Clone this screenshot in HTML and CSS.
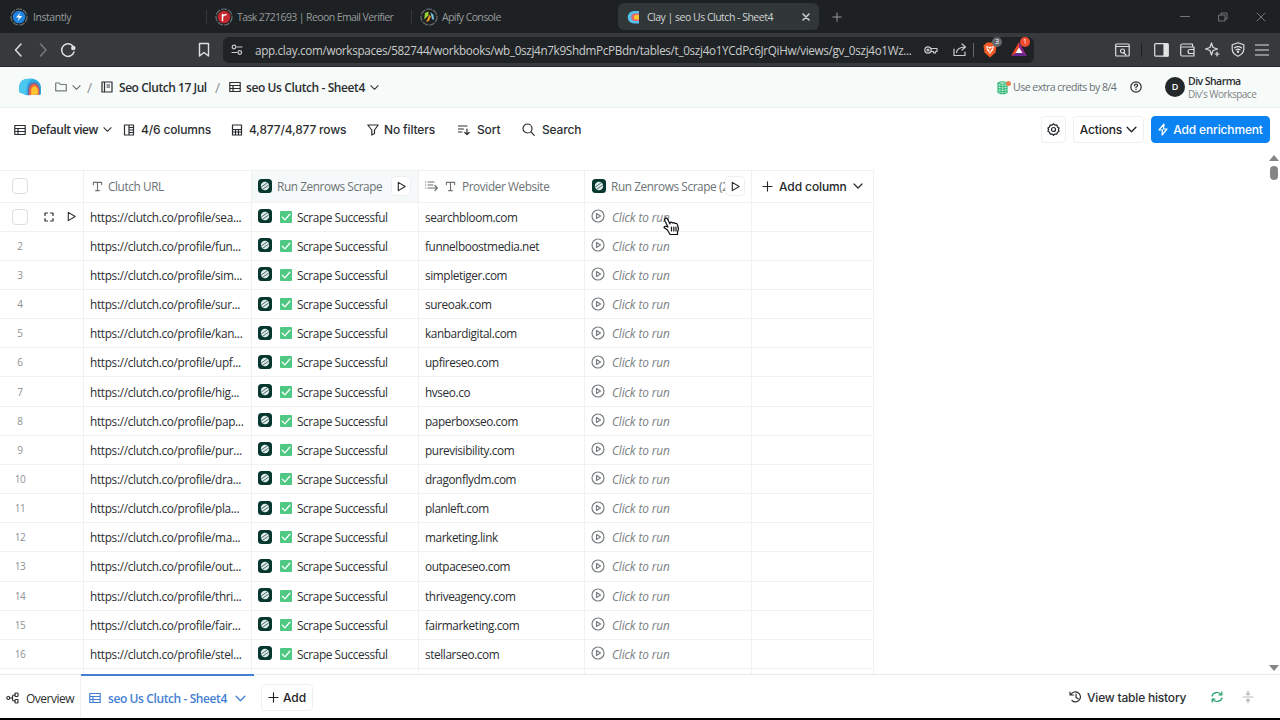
FILE: index.html
```html
<!DOCTYPE html>
<html lang="en">
<head>
    <meta charset="UTF-8">
    <meta name="viewport" content="width=device-width, initial-scale=1.0">
    <title>Clay | seo Us Clutch - Sheet4</title>
    <link rel="stylesheet" href="styles.css">
</head>
<body>

<!-- icons used more than once -->
<svg class="symbols" width="0" height="0">
    <symbol id="icon-chevron" viewBox="0 0 10 10"><path d="M1 3l4 4 4-4"/></symbol>
    <symbol id="icon-play" viewBox="0 0 12 12"><path d="M2.5 1.5v9l7.5-4.5z"/></symbol>
    <symbol id="icon-table" viewBox="0 0 12 12"><path d="M.8 1.5h10.4v9H.8zM.8 4.5h10.4M.8 7.5h10.4M4 4.5v6"/></symbol>
    <symbol id="icon-plus" viewBox="0 0 12 12"><path d="M6 1v10M1 6h10"/></symbol>
    <symbol id="icon-text" viewBox="0 0 12 12"><path d="M1.5 4V1.5h9V4M6 1.5v9M4 10.5h4"/></symbol>
    <symbol id="icon-zenrows" viewBox="0 0 14 14">
        <rect width="14" height="14" rx="3.5" fill="#06372f" stroke="none"/>
        <circle cx="7" cy="7" r="4.2" fill="#dfecea" stroke="none"/>
        <path d="M3.500 7.800l5.500-3.800M5 10l5.500-3.800" stroke="#06372f" stroke-width=".7"/>
    </symbol>
    <symbol id="icon-check" viewBox="0 0 12 12">
        <rect width="12" height="12" rx="1" fill="#4fc883" stroke="none"/>
        <path d="M2.3 6.3l2.6 2.6 4.9-5.6" stroke="#fff" stroke-width="1.3"/>
    </symbol>
    <symbol id="icon-run" viewBox="0 0 14 14"><circle cx="7" cy="7" r="6"/><path d="M5.5 4.5v5l4-2.5z"/></symbol>
</svg>

<div class="tabs">
    <div class="tab tab-instantly">
        <svg class="favicon" viewBox="0 0 18 18"><circle class="ring" cx="9" cy="9" r="8"/><circle cx="9" cy="9" r="6.3" fill="#1f83e0" stroke="none"/><path d="M10.5 4.5L6 9.5h3l-1.5 4L12.2 8H9z" fill="#fff" stroke="none"/></svg>
        <span>Instantly</span>
    </div>
    <div class="tab tab-reoon">
        <svg class="favicon" viewBox="0 0 18 18"><circle class="ring" cx="9" cy="9" r="8"/><circle cx="9" cy="9" r="6.3" fill="#c5272f" stroke="none"/><path d="M7.5 12.5V6.5M7.5 8.5q1-2 3.5-1.8" stroke="#fff" stroke-width="1.5"/></svg>
        <span>Task 2721693 | Reoon Email Verifier</span>
    </div>
    <div class="tab tab-apify">
        <svg class="favicon" viewBox="0 0 18 18"><circle class="ring" cx="9" cy="9" r="8"/><path d="M4.2 11.5L5 5l3.500-1.500v4z" fill="#9ad32c" stroke="none"/><path d="M6 14l3.500-7 1.500 1-2 5z" fill="#f29a25" stroke="none"/><path d="M10.500 4l3 3 .5 5-2-1z" fill="#72c4df" stroke="none"/></svg>
        <span>Apify Console</span>
    </div>
    <div class="tab tab-clay active">
        <svg class="favicon" viewBox="0 0 18 18"><path d="M14 3H9a6 6 0 0 0 0 12.500h5z" fill="#57c1ed" stroke="none"/><path d="M14 5.500h-4a3.700 3.700 0 0 0 0 7.500h4z" fill="#e9646d" stroke="none"/><path d="M14 7h-3a2 2 0 0 0 0 4.500h3z" fill="#ffc72e" stroke="none"/></svg>
        <span>Clay | seo Us Clutch - Sheet4</span>
        <svg class="close" viewBox="0 0 8 8"><path d="M1 1l6 6M7 1L1 7"/></svg>
    </div>
    <svg class="new-tab"><use href="#icon-plus"/></svg>
    <div class="window-buttons">
        <svg viewBox="0 0 10 10"><path d="M.5 4.500h9"/></svg>
        <svg viewBox="0 0 10 10"><path d="M1 3h6v6H1zM3 3V1h6v6H7"/></svg>
        <svg viewBox="0 0 10 10"><path d="M1 1l8 8M9 1L1 9"/></svg>
    </div>
</div>

<div class="browser-bar">
    <div class="nav-buttons">
        <svg width="16" height="16" viewBox="0 0 16 16"><path d="M11 2L5.500 8l5.500 6"/></svg>
        <svg class="dim" width="16" height="16" viewBox="0 0 16 16"><path d="M5.500 2L11 8l-5.500 6"/></svg>
        <svg width="16" height="16" viewBox="0 0 16 16"><path d="M14 10A6.300 6.300 0 1 1 13.500 5"/><circle cx="13.300" cy="6" r="1.500" fill="#ddd"/></svg>
    </div>
    <svg class="bookmark" width="12" height="16" viewBox="0 0 12 16"><path d="M1.500 1.500h9v12.500L6 10.500 1.500 14z"/></svg>
    <div class="address">
        <svg class="site-info" width="12" height="12" viewBox="0 0 12 12"><circle cx="3" cy="3" r="1.800"/><path d="M6 3h5M1 8.500h5"/><circle cx="8.800" cy="8.500" r="1.800"/></svg>
        <span class="url">app.clay.com/workspaces/582744/workbooks/wb_0szj4n7k9ShdmPcPBdn/tables/t_0szj4o1YCdPc6JrQiHw/views/gv_0szj4o1Wz...</span>
        <svg class="key" width="14" height="10" viewBox="0 0 14 10"><circle cx="4" cy="5" r="3.200"/><circle cx="4" cy="5" r="1"/><path d="M7 3.500h6v3h-1.500v1.500h-2V6.500H7"/></svg>
        <svg class="share" width="14" height="14" viewBox="0 0 14 14"><path d="M1 6v6.500h11V9M3.500 9.500Q4 4.500 12 4M9 1l3.500 3L9 7"/></svg>
        <span class="divider"></span>
        <div class="ext">
            <svg width="14" height="16" viewBox="0 0 14 16"><path d="M4 .5h6l3.500 3-1 7L7 15.500 1.500 10.500l-1-7z" fill="#f05a24" stroke="none"/><path d="M3 4l4 1 4-1-1 4-3 4-3-4z" fill="#fff" stroke="none"/><path d="M5 6l2 2 2-2M7 8v2" stroke="#f05a24"/></svg>
            <span class="badge badge-grey">3</span>
        </div>
        <div class="ext">
            <svg width="16" height="14" viewBox="0 0 16 14"><path d="M8 0L0 14l8-4z" fill="#ef4423" stroke="none"/><path d="M8 0l8 14-8-4z" fill="#8e258d" stroke="none"/><path d="M0 14h16l-8-4.500z" fill="#672a91" stroke="none"/><path d="M8 5.500L4.500 11h7z" fill="#fff" stroke="none"/></svg>
            <span class="badge badge-red">1</span>
        </div>
    </div>
    <div class="browser-tools">
        <svg width="15" height="14" viewBox="0 0 15 14"><rect x=".7" y="1" width="13.500" height="12" rx="1"/><path d="M1 3.500h13M9 10l2 2"/><circle cx="7.500" cy="8" r="2"/></svg>
        <span class="tool-divider"></span>
        <svg width="15" height="14" viewBox="0 0 15 14"><rect x=".7" y=".7" width="13.500" height="12.500" rx="1"/><path d="M10 1h4v12h-4z" fill="#e4e4e4"/></svg>
        <svg width="15" height="14" viewBox="0 0 15 14"><path d="M12.500 4V1H2Q.7 1 .7 3v8.500Q.7 13 2 13h12V4H2M14 6.500h-4a1.800 1.800 0 0 0 0 4h4"/></svg>
        <svg width="15" height="15" viewBox="0 0 15 15"><path d="M6.500 1L8 5.500 12.500 7 8 8.500 6.500 13 5 8.500.5 7 5 5.500zM12 10v4M10 12h4"/></svg>
        <svg width="14" height="15" viewBox="0 0 14 15"><path d="M7 .8l5.800 2v4.500Q12.500 12 7 14.200 1.500 12 1.200 7.300V2.800zM3.500 5.800q3.500-2.500 7 0M5 7.800q2-1.500 4 0"/><circle cx="7" cy="9.800" r=".6"/></svg>
        <svg width="14" height="14" viewBox="0 0 14 14"><path d="M.5 2h13M.5 7h13M.5 12h13"/></svg>
    </div>
</div>

<div class="app-header">
    <svg class="logo" width="22" height="18" viewBox="0 0 22 18">
        <path d="M0 14V8.500Q1.500.8 9 .8h4.500Q21 2 22 9v7.500H14l-6.500.8z" fill="#2fa9df"/>
        <path d="M0 14V8.500Q1.500.8 9 .8h4.500Q8 3.500 7.500 10v7.300z" fill="#4cc8f0"/>
        <path d="M9 17.200V10.500Q10 4.500 15 4.500q5 .5 5.800 6.500v5.500z" fill="#7263a0"/>
        <path d="M10.300 17v-6q1-5 4.900-5 4 .5 4.800 5.500v5z" fill="#f4663f"/>
        <path d="M12.200 16.900v-5q.8-3.700 3.300-3.700 2.700.3 3.300 4v4.400z" fill="#ffc62f"/>
    </svg>
    <svg class="folder" width="12" height="10" viewBox="0 0 12 10"><path d="M.7 8.800V1h3.600l1.200 1.500h5.800v6.300z"/></svg>
    <svg class="chev-folder" width="9" height="9"><use href="#icon-chevron"/></svg>
    <span class="slash slash-1">/</span>
    <svg class="workbook" width="12" height="12" viewBox="0 0 12 12"><path d="M1 1h10v10H1zM3.500 1v10M6 4h2.500M6 6h2.500"/></svg>
    <span class="crumb crumb-book">Seo Clutch 17 Jul</span>
    <span class="slash slash-2">/</span>
    <svg class="sheet" width="12" height="12"><use href="#icon-table"/></svg>
    <span class="crumb crumb-sheet">seo Us Clutch - Sheet4</span>
    <svg class="chev-sheet" width="9" height="9"><use href="#icon-chevron"/></svg>
    <div class="header-right">
        <svg class="coins" width="14" height="15" viewBox="0 0 14 15"><path d="M1 3v9.500q4.500 2.500 9 0V3q-4.500-2.500-9 0zM1 3q4.500 2.500 9 0M1 5.500q4.500 2.500 9 0M1 8q4.500 2.500 9 0M1 10.500q4.500 2.500 9 0M4 4v10M7 4v10" fill="#c9efdb" stroke="#35b979"/><circle cx="11.500" cy="3.500" r="2.500" fill="#f07f4f" stroke="none"/></svg>
        <span class="credits">Use extra credits by 8/4</span>
        <svg class="help" width="12" height="12" viewBox="0 0 12 12"><circle cx="6" cy="6" r="5.200"/><path d="M4.500 4.800Q4.500 3.200 6 3.200q1.600 0 1.600 1.300Q7.600 5.500 6 6v1M6 8.600v.1"/></svg>
        <span class="avatar">D</span>
        <div class="user">
            <span class="user-name">Div Sharma</span>
            <span class="workspace">Div's Workspace</span>
        </div>
    </div>
</div>

<div class="view-bar">
    <div class="view-item item-view"><svg width="12" height="12"><use href="#icon-table"/></svg><span>Default view</span><svg class="small-chev" width="9" height="9"><use href="#icon-chevron"/></svg></div>
    <div class="view-item item-columns"><svg width="12" height="12" viewBox="0 0 12 12"><path d="M1.500 1h9v10h-9zM6 1v10M6 3.500h4.500M6 6h4.500M6 8.500h4.500"/></svg><span>4/6 columns</span></div>
    <div class="view-item item-rows"><svg width="12" height="12" viewBox="0 0 12 12"><path d="M1.500 1h9v10h-9zM1.500 5.500h9M4.500 5.500v5.500M7.500 5.500v5.500M1.500 8h9"/></svg><span>4,877/4,877 rows</span></div>
    <div class="view-item item-filter"><svg width="12" height="12" viewBox="0 0 12 12"><path d="M.8 1h10.400L7.500 6v3.500L4.800 11V6z"/></svg><span>No filters</span></div>
    <div class="view-item item-sort"><svg width="12" height="12" viewBox="0 0 12 12"><path d="M.5 2H9M.5 5h5M.5 8h3.500M9 5v5M6.800 8.500L9 10.500l2.200-2"/></svg><span>Sort</span></div>
    <div class="view-item item-search"><svg width="13" height="13" viewBox="0 0 13 13"><circle cx="5.500" cy="5.500" r="4.500"/><path d="M9 9l3.300 3.300"/></svg><span>Search</span></div>
    <div class="view-actions">
        <button class="btn btn-gear"><svg width="13" height="13" viewBox="0 0 13 13"><path d="M6.500.8l1.400 1.300 2-.1.500 1.900 1.700 1-.7 1.600.7 1.700-1.700 1-.5 1.900-2-.1-1.400 1.300-1.400-1.300-2 .1-.5-1.900-1.700-1 .7-1.700-.7-1.600 1.700-1 .5-1.900 2 .1z"/><circle cx="6.500" cy="6.500" r="2"/></svg></button>
        <button class="btn btn-actions">Actions <svg width="11" height="11"><use href="#icon-chevron"/></svg></button>
        <button class="btn btn-primary"><svg width="10" height="13" viewBox="0 0 10 13"><path d="M6 1L1 7h3.500L4 12l5-6H5.500z"/></svg><span>Add enrichment</span></button>
    </div>
</div>

<div class="table-area">
    <div class="table" id="table">
        <div class="row head">
            <div class="cell cell-num"><span class="checkbox"></span></div>
            <div class="cell"><svg class="type-icon" width="11" height="11"><use href="#icon-text"/></svg><span>Clutch URL</span></div>
            <div class="cell shaded"><svg width="14" height="14"><use href="#icon-zenrows"/></svg><span class="head-label">Run Zenrows Scrape</span><span class="play-btn"><svg width="11" height="11"><use href="#icon-play"/></svg></span></div>
            <div class="cell head-provider"><svg class="list-icon" width="13" height="12" viewBox="0 0 13 12"><path d="M.5 2h.1M3 2h6M.5 5h.1M3 5h5M.5 8h.1M3 8h9M10 5.500L12.300 8 10 10.500"/></svg><svg class="type-icon" width="11" height="11"><use href="#icon-text"/></svg><span>Provider Website</span></div>
            <div class="cell head-second"><svg width="14" height="14"><use href="#icon-zenrows"/></svg><span class="head-label head-cut">Run Zenrows Scrape (2)</span><span class="play-btn"><svg width="11" height="11"><use href="#icon-play"/></svg></span></div>
            <div class="cell add-column"><svg width="11" height="11"><use href="#icon-plus"/></svg><span>Add column</span><svg width="10" height="10"><use href="#icon-chevron"/></svg></div>
        </div>
    </div>
    <div class="scrollbar">
        <span class="arrow-up"></span>
        <span class="thumb"></span>
        <span class="arrow-down"></span>
    </div>
    <svg class="cursor" width="18" height="20" viewBox="0 0 18 20"><path d="M2 1.500Q3.500.5 4.500 2l2.500 5V5.500q1.500-1 2.500.5 1.500-1 2.500.5 2-.8 2.500 1.500l1 4-1 3v2.500H7L4.500 13 1 10.500q0-1.500 2-1.200L5 10 1.500 3z" fill="#fff" stroke="#111"/><path d="M8.500 10v4M10.800 10v4M13 10v4" stroke="#111"/></svg>
</div>

<div class="bottom-bar">
    <div class="sheet-tab overview"><svg width="13" height="12" viewBox="0 0 13 12"><circle cx="2.300" cy="6" r="1.500"/><path d="M4 6h2.500M9 3H8Q6.500 3 6.500 4.500v3Q6.500 9 8 9h1"/><rect x="9" y="1" width="3" height="3.500" rx=".8"/><rect x="9" y="7.500" width="3" height="3.500" rx=".8"/></svg><span>Overview</span></div>
    <div class="sheet-tab current"><svg width="12" height="12"><use href="#icon-table"/></svg><span>seo Us Clutch - Sheet4</span><svg class="tab-chev" width="11" height="11"><use href="#icon-chevron"/></svg></div>
    <button class="btn btn-add"><svg width="11" height="11"><use href="#icon-plus"/></svg>Add</button>
    <div class="history"><svg width="13" height="12" viewBox="0 0 13 12"><path d="M2 3.500A5 5 0 1 1 3 9.500M1 1v3h3.500M7 3v3.500l2.200 1.200"/></svg><span>View table history</span></div>
    <svg class="refresh" width="12" height="12" viewBox="0 0 12 12"><path d="M1 5a5 4.500 0 0 1 9-1.500M10.800 1v3H8M11 7a5 4.500 0 0 1-9 1.500M1.200 11V8H4"/></svg>
    <svg class="collapse" width="12" height="14" viewBox="0 0 12 14"><path d="M1 7h10M6 1v4M4.500 3.500L6 5l1.500-1.500M6 13V9M4.500 10.500L6 9l1.500 1.500"/></svg>
</div>

<script>
    const rows = [
        ['sea', 'searchbloom.com'],
        ['fun', 'funnelboostmedia.net'],
        ['sim', 'simpletiger.com'],
        ['sur', 'sureoak.com'],
        ['kan', 'kanbardigital.com'],
        ['upf', 'upfireseo.com'],
        ['hig', 'hvseo.co'],
        ['pap', 'paperboxseo.com'],
        ['pur', 'purevisibility.com'],
        ['dra', 'dragonflydm.com'],
        ['pla', 'planleft.com'],
        ['ma', 'marketing.link'],
        ['out', 'outpaceseo.com'],
        ['thri', 'thriveagency.com'],
        ['fair', 'fairmarketing.com'],
        ['stel', 'stellarseo.com']
    ];

    const tableEl = document.getElementById('table');

    rows.forEach((row, i) => {
        // first row is hovered, so it shows its controls instead of the number
        const number = i === 0
            ? `<span class="checkbox"></span>
               <svg class="expand" width="10" height="10" viewBox="0 0 10 10"><path d="M1 3.500V1h2.500M6.500 1H9v2.500M9 6.500V9H6.500M3.500 9H1V6.500"/></svg>
               <svg class="row-play" width="11" height="11"><use href="#icon-play"/></svg>`
            : `<span class="number">${i + 1}</span>`;

        tableEl.insertAdjacentHTML('beforeend', `
            <div class="row">
                <div class="cell cell-num">${number}</div>
                <div class="cell cell-url"><span>https://clutch.co/profile/${row[0]}...</span></div>
                <div class="cell cell-status"><svg class="source" width="14" height="14"><use href="#icon-zenrows"/></svg><svg class="check" width="12" height="12"><use href="#icon-check"/></svg><span>Scrape Successful</span></div>
                <div class="cell cell-site"><span>${row[1]}</span></div>
                <div class="cell cell-run"><svg class="source" width="14" height="14"><use href="#icon-run"/></svg><span>Click to run</span></div>
                <div class="cell"></div>
            </div>`);
    });

    // start of the next row under the bottom bar
    tableEl.insertAdjacentHTML('beforeend', '<div class="row">' + '<div class="cell"></div>'.repeat(6) + '</div>');
</script>

</body>
</html>
```
FILE: styles.css
```css
* {
    box-sizing: border-box;
}
body {
    margin: 0;
    width: 1280px;
    height: 720px;
    display: flex;
    flex-direction: column;
    overflow: hidden;
    background-color: #fff;
    color: #2b2e31;
    font-family: "Open Sans", "Noto Sans", sans-serif;
    font-size: 12px;
    white-space: nowrap;
}
svg {
    flex: none;
    fill: none;
    stroke: currentColor;
    stroke-width: 1.2;
    stroke-linecap: round;
    stroke-linejoin: round;
}
.symbols {
    position: absolute;
}

/* browser */
.tabs {
    height: 33px;
    flex: none;
    display: flex;
    align-items: center;
    background-color: #1d2123;
    color: #989b9c;
    font-size: 10.5px;
    letter-spacing: -0.6px;
}
.tab {
    height: 27px;
    display: flex;
    align-items: center;
    padding-left: 10px;
}
.tab .favicon {
    width: 18px;
    height: 18px;
    margin-right: 4px;
}
.ring {
    stroke: #687071;
    stroke-dasharray: 5 2;
}
.tab-instantly {
    width: 206px;
    letter-spacing: -0.45px;
}
.tab-instantly .favicon {
    margin-right: 5px;
}
.tab-reoon, .tab-apify {
    width: 205px;
    height: 14px;
    border-left: 1px solid #34393b;
    padding-left: 8px;
}
.tab-clay {
    width: 201px;
    margin-left: 2px;
    padding: 0 9px 0 7px;
    border-radius: 6px;
    background-color: #313638;
    color: #d0d3d4;
    letter-spacing: -0.5px;
}
.close {
    width: 8px;
    height: 8px;
    margin-left: auto;
    stroke-width: 1.5;
}
.new-tab {
    width: 10px;
    height: 10px;
    margin-left: 13px;
}
.window-buttons {
    display: flex;
    gap: 28px;
    margin-left: auto;
    margin-right: 14px;
    color: #737778;
}
.window-buttons svg {
    width: 10px;
    height: 10px;
    stroke-width: 1;
}
.browser-bar {
    height: 34px;
    flex: none;
    display: flex;
    align-items: center;
    background-color: #373a3c;
    border-bottom: 1px solid #222527;
    color: #dedfdf;
}
.nav-buttons {
    width: 198px;
    display: flex;
    gap: 9px;
    padding-left: 10px;
}
.nav-buttons svg {
    stroke-width: 1.5;
}
.nav-buttons .dim {
    color: #77797b;
}
.bookmark {
    stroke-width: 1.4;
}
.address {
    width: 811px;
    height: 26px;
    margin-left: 13px;
    padding-left: 8px;
    display: flex;
    align-items: center;
    border-radius: 6px;
    background-color: #202325;
    color: #c9cbcc;
}
.url {
    width: 658px;
    margin-left: 12px;
    font-size: 11.7px;
    letter-spacing: -0.32px;
}
.key {
    margin-left: 11px;
}
.share {
    margin-left: 15px;
}
.divider {
    width: 1px;
    height: 14px;
    margin-left: 6px;
    background-color: #62676a;
}
.ext {
    position: relative;
    width: 16px;
    height: 16px;
    margin-left: 9px;
}
.ext + .ext {
    margin-left: 12px;
}
.badge {
    position: absolute;
    top: -5px;
    left: 9px;
    width: 10px;
    height: 10px;
    border-radius: 5px;
    color: #fff;
    font-size: 7px;
    line-height: 10px;
    text-align: center;
}
.badge-grey {
    background-color: #62666c;
}
.badge-red {
    background-color: #ef4b2c;
}
.browser-tools {
    display: flex;
    align-items: center;
    gap: 10.4px;
    margin-left: auto;
    margin-right: 11px;
}
.tool-divider {
    width: 1px;
    height: 14px;
    margin: 0 2px 0 1px;
    background-color: #1c1f20;
}

/* app header */
.app-header {
    height: 41px;
    flex: none;
    display: flex;
    align-items: center;
    padding-left: 19px;
    background-color: #f6faf9;
    border-bottom: 1px solid #eceff0;
}
.logo {
    stroke: none;
}
.folder {
    margin-left: 14px;
    color: #737a7d;
}
.chev-folder {
    margin-left: 5px;
    color: #60676a;
}
.slash {
    width: 7px;
    color: #8f9496;
    font-size: 14px;
}
.slash-1 {
    margin-left: 6px;
}
.workbook {
    margin-left: 7px;
}
.crumb {
    font-size: 12px;
    font-weight: 600;
    letter-spacing: -0.4px;
}
.crumb-book {
    width: 89px;
    margin-left: 6px;
    letter-spacing: -0.45px;
}
.slash-2 {
    margin-left: 7px;
}
.sheet {
    margin-left: 7px;
}
.crumb-sheet {
    width: 120px;
    margin-left: 5px;
}
.chev-sheet {
    margin-left: 4px;
}
.header-right {
    display: flex;
    align-items: center;
    margin-left: auto;
}
.credits {
    width: 104px;
    margin-left: 2px;
    color: #686f72;
    font-size: 10.5px;
    letter-spacing: -0.5px;
}
.help {
    margin-left: 13px;
}
.avatar {
    width: 20px;
    height: 20px;
    margin-left: 23px;
    border-radius: 10px;
    background-color: #23282b;
    color: #fff;
    font-size: 9px;
    font-weight: 600;
    line-height: 20px;
    text-align: center;
}
.user {
    width: 92px;
    margin-left: 3px;
    padding-top: 1px;
    display: flex;
    flex-direction: column;
    line-height: 13px;
}
.user-name {
    font-size: 10.5px;
    font-weight: 600;
    letter-spacing: -0.55px;
}
.workspace {
    color: #7d8486;
    font-size: 10px;
    letter-spacing: -0.5px;
}

/* view toolbar */
.view-bar {
    height: 43px;
    flex: none;
    display: flex;
    align-items: center;
    padding-left: 14px;
    font-family: Inter, sans-serif;
    font-size: 12px;
    font-weight: 500;
    letter-spacing: -0.15px;
}
.view-item {
    display: flex;
    align-items: center;
}
.view-item svg + span {
    margin-left: 6px;
}
.item-view {
    width: 109px;
    font-family: "Open Sans", sans-serif;
    font-weight: 600;
    font-size: 12px;
    letter-spacing: -0.45px;
}
.item-view svg + span {
    margin-left: 5px;
}
.small-chev {
    margin-left: 5px;
}
.item-columns {
    width: 108px;
}
.item-rows {
    width: 136px;
    letter-spacing: -0.18px;
}
.item-filter {
    width: 91px;
}
.item-filter svg + span {
    margin-left: 5px;
}
.item-sort {
    width: 64px;
}
.item-sort svg + span, .item-search svg + span {
    margin-left: 7px;
}
.view-actions {
    display: flex;
    margin-left: auto;
    margin-right: 10px;
    gap: 7px;
}
.btn {
    height: 27px;
    display: flex;
    align-items: center;
    justify-content: center;
    padding: 0;
    border: 1px solid #eff0f1;
    border-radius: 4px;
    background-color: #fff;
    color: #1e2224;
    font-family: Inter, sans-serif;
    font-size: 12px;
    font-weight: 500;
    letter-spacing: -0.15px;
}
.btn-gear {
    width: 25px;
}
.btn-actions {
    width: 71px;
    gap: 4px;
}
.btn-primary {
    width: 119px;
    gap: 5px;
    border-color: #0b83f3;
    background-color: #0b83f3;
    color: #fff;
}

/* table */
.table-area {
    position: relative;
    flex: 1;
    min-height: 0;
    padding-top: 19px;
    overflow: hidden;
    display: flex;
    justify-content: space-between;
}
.table {
    width: 874px;
    border-top: 1px solid #f0f2f2;
}
.row {
    height: 29.17px;
    display: grid;
    grid-template-columns: 84px 168px 167px 166px 167px 122px;
}
.row.head {
    height: 31.5px;
    color: #6b7174;
}
.cell {
    min-width: 0;
    display: flex;
    align-items: center;
    padding-left: 6px;
    border-right: 1px solid #eff1f2;
    border-bottom: 1px solid #eff1f2;
    font-size: 11.8px;
    letter-spacing: -0.4px;
}
.cell-num {
    padding-left: 12px;
}
.cell-url {
    letter-spacing: -0.32px;
}
.checkbox {
    width: 16px;
    height: 16px;
    flex: none;
    border: 1px solid #dcdfe0;
    border-radius: 4px;
    background-color: #fff;
}
.expand {
    margin-left: 16px;
}
.row-play {
    margin-left: 12px;
}
.number {
    width: 16px;
    color: #8c9193;
    font-size: 10px;
    text-align: center;
}
.type-icon {
    margin-left: 2px;
    margin-right: 5px;
}
.shaded {
    background-color: #f6f9f9;
}
.head-label {
    width: 109px;
    margin-left: 5px;
}
.head-second {
    padding-left: 7px;
}
.head-cut {
    width: 114px;
    overflow: hidden;
}
.play-btn {
    width: 20px;
    height: 20px;
    flex: none;
    margin-left: 5px;
    display: flex;
    align-items: center;
    justify-content: center;
    border: 1px solid #edf0f0;
    border-radius: 4px;
    background-color: #fff;
    color: #25282b;
}
.head-cut + .play-btn {
    margin-left: 0;
}
.head-provider .type-icon {
    margin-left: 7px;
    margin-right: 6px;
}
.add-column {
    padding-left: 10px;
    color: #25282b;
    font-family: Inter, sans-serif;
    font-size: 12px;
    font-weight: 500;
    letter-spacing: -0.1px;
}
.add-column span {
    width: 67px;
    margin: 0 7px 0 6px;
}
.source {
    margin-bottom: 1px;
}
.check {
    margin-left: 8px;
    margin-right: 5px;
}
.cell-run {
    color: #777e81;
    font-style: italic;
    letter-spacing: -0.1px;
}
.cell-run span {
    margin-left: 7px;
}
.scrollbar {
    width: 12px;
    margin-top: -15px;
    padding-bottom: 3px;
    display: flex;
    flex-direction: column;
    align-items: center;
}
.arrow-up, .arrow-down {
    border: 5px solid transparent;
}
.arrow-up {
    border-top-width: 0;
    border-bottom: 6px solid #858585;
}
.arrow-down {
    margin-top: auto;
    border-bottom-width: 0;
    border-top: 6px solid #858585;
}
.thumb {
    width: 8px;
    height: 14px;
    margin-top: 5px;
    border-radius: 4px;
    background-color: #858585;
}
.cursor {
    position: absolute;
    top: 66px;
    left: 663px;
}

/* sheet tabs */
.bottom-bar {
    height: 46px;
    flex: none;
    display: flex;
    align-items: center;
    padding-top: 1px;
    border-top: 1px solid #e9ecec;
    border-bottom: 2px solid #000;
    background-color: #fff;
}
.sheet-tab {
    height: 100%;
    display: flex;
    align-items: center;
}
.overview {
    width: 81px;
    padding-top: 2px;
    padding-left: 6px;
    border-right: 1px solid #f0f2f2;
    letter-spacing: -0.5px;
}
.overview span {
    margin-left: 7px;
}
.current {
    width: 173px;
    height: 44px;
    margin-top: -3px;
    padding-top: 3px;
    padding-left: 8px;
    border-top: 2px solid #4380d3;
    color: #4380d3;
    font-weight: 600;
    letter-spacing: -0.4px;
}
.current span {
    width: 120px;
    margin-left: 7px;
}
.tab-chev {
    margin-left: 7px;
}
.btn-add {
    width: 52px;
    margin-left: 7px;
    gap: 4px;
}
.history {
    display: flex;
    align-items: center;
    margin-left: auto;
    font-family: Inter, sans-serif;
    font-size: 12px;
    font-weight: 500;
    letter-spacing: -0.2px;
}
.history span {
    width: 101px;
    margin-left: 5px;
}
.refresh {
    margin-left: 23px;
    color: #1f9d68;
}
.collapse {
    margin-left: 19px;
    margin-right: 26px;
    color: #b5b9bb;
}
```
